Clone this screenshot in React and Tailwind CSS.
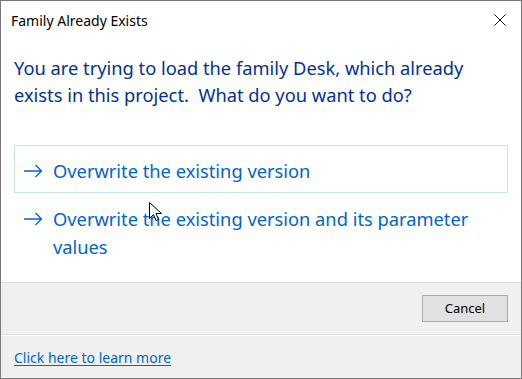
import React from "react";

function Arrow() {
  return (
    <svg width="20" height="14" viewBox="0 0 20 14" className="shrink-0">
      <path d="M1 7H18.5M12.5 1L18.5 7L12.5 13" fill="none" stroke="#0066cc" strokeWidth="1.4" />
    </svg>
  );
}

function CommandLink({ children, selected }) {
  return (
    <div
      className={
        selected
          ? "flex items-start gap-[10px] border border-[#c5e0f8] pl-[8px] pt-[11px] pb-[7px]"
          : "flex items-start gap-[10px] border border-transparent pl-[8px] pt-[11px] pb-[7px]"
      }
    >
      <div className="h-[28px] flex items-center">
        <Arrow />
      </div>
      <div className="text-[#0066cc] text-[18.3px] leading-[28px] pr-[30px]">{children}</div>
    </div>
  );
}

export default function App() {
  return (
    <div className="relative w-[522px] h-[379px] border border-[#7a7a7a] bg-white flex flex-col font-['Segoe_UI','Noto_Sans',sans-serif] text-black">
      {/* title bar */}
      <div className="h-[38px] flex items-center justify-between pl-[10px] pr-[15px]">
        <span className="text-[14px]">Family Already Exists</span>
        <svg width="12" height="12" viewBox="0 0 12 12">
          <path d="M0.5 0.5L11.5 11.5M11.5 0.5L0.5 11.5" stroke="#111" strokeWidth="1" />
        </svg>
      </div>

      {/* content */}
      <div className="flex-1 px-[13px]">
        <p className="mt-[15px] text-[#003399] text-[18.3px] leading-[27px] pr-[20px]">
          You are trying to load the family Desk, which already exists in this project.&nbsp; What do you want to do?
        </p>
        <div className="mt-[37px] flex flex-col">
          <CommandLink selected>Overwrite the existing version</CommandLink>
          <CommandLink>Overwrite the existing version and its parameter values</CommandLink>
        </div>
      </div>

      {/* buttons */}
      <div className="h-[52px] shrink-0 bg-[#f0f0f0] border-t border-[#dfdfdf] flex items-center justify-end pr-[13px]">
        <button className="w-[86px] h-[27px] border border-[#adadad] bg-[#e1e1e1] text-[13px] text-black">
          Cancel
        </button>
      </div>

      {/* footer */}
      <div className="h-[44px] shrink-0 bg-[#f0f0f0] border-t border-[#dfdfdf]">
        <div className="h-full border-t border-white flex items-center pl-[13px]">
          <a className="text-[#0066cc] text-[14px] underline underline-offset-2">Click here to learn more</a>
        </div>
      </div>

      {/* mouse pointer */}
      <svg className="absolute left-[148px] top-[201px]" width="13" height="20" viewBox="0 0 13 20">
        <path d="M0.5 0.5V16.5L4.5 12.5L7 18.5L9.5 17.5L7 11.5H12.5Z" fill="white" stroke="black" strokeWidth="1" strokeLinejoin="round" />
      </svg>
    </div>
  );
}
